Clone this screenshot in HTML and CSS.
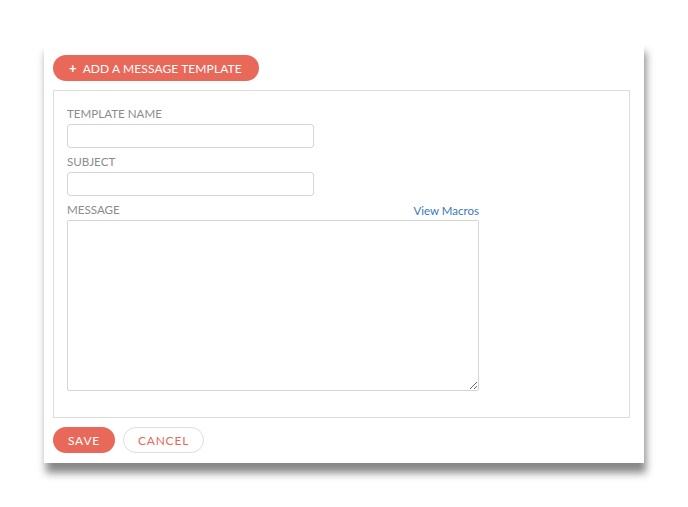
FILE: index.html
```html
<!DOCTYPE html>
<html>
<head>
<meta charset="utf-8">
<link rel="stylesheet" href="styles.css">
</head>
<body>
<div class="card">
  <button class="add-btn"><span class="plus">+</span>ADD A MESSAGE TEMPLATE</button>
  <div class="panel">
    <div class="field">
      <label class="label">TEMPLATE NAME</label>
      <input class="input" type="text">
    </div>
    <div class="field">
      <label class="label">SUBJECT</label>
      <input class="input" type="text">
    </div>
    <div class="field wide">
      <div class="label-row">
        <label class="label">MESSAGE</label>
        <a class="macros" href="#">View Macros</a>
      </div>
      <textarea class="textarea"></textarea>
    </div>
  </div>
  <div class="actions">
    <button class="btn save">SAVE</button>
    <button class="btn cancel">CANCEL</button>
  </div>
</div>
</body>
</html>
```
FILE: styles.css
```css
html, body {
  margin: 0;
  padding: 0;
  background: #fff;
  font-family: Lato, "Open Sans", sans-serif;
}
body {
  min-height: 507px;
  padding-top: 42px;
  box-sizing: border-box;
}
.card {
  margin: 0 0 0 44px;
  width: 600px;
  height: 421px;
  box-sizing: border-box;
  background: #fff;
  box-shadow: 2px 10px 8px rgba(0, 0, 0, 0.47);
  padding: 13px 14px 0 9px;
}
.add-btn {
  display: flex;
  align-items: center;
  height: 26px;
  width: 206px;
  box-sizing: border-box;
  padding: 0 0 0 16px;
  border: none;
  border-radius: 13px;
  background: #e8685a;
  color: #fff;
  font-family: Lato, sans-serif;
  font-size: 12px;
  letter-spacing: 0.1px;
  cursor: pointer;
}
.plus {
  font-weight: 700;
  font-size: 13px;
  margin-right: 6px;
}
.panel {
  margin-top: 9px;
  height: 328px;
  box-sizing: border-box;
  border: 1px solid #ddd;
  padding: 15px 0 0 13px;
  display: flex;
  flex-direction: column;
  gap: 6px;
}
.field {
  display: flex;
  flex-direction: column;
  width: 247px;
}
.field.wide {
  width: 412px;
}
.label {
  font-size: 11.6px;
  line-height: 15px;
  color: #8c8c8c;
  margin-bottom: 3px;
}
.label-row {
  display: flex;
  justify-content: space-between;
  align-items: baseline;
}
.macros {
  font-size: 11.5px;
  line-height: 15px;
  color: #3b79b6;
  text-decoration: none;
  position: relative;
  top: 1px;
}
.input {
  height: 24px;
  box-sizing: border-box;
  border: 1px solid #d6d6d6;
  border-radius: 3px;
  margin: 0;
  padding: 0 6px;
}
.textarea {
  height: 171px;
  box-sizing: border-box;
  border: 1px solid #d6d6d6;
  border-radius: 2px;
  margin: 0;
  padding: 4px 6px;
  resize: both;
}
.actions {
  margin-top: 9px;
  display: flex;
  gap: 8px;
}
.btn {
  height: 26px;
  box-sizing: border-box;
  border-radius: 13px;
  font-family: Lato, sans-serif;
  font-size: 12px;
  letter-spacing: 0.8px;
  cursor: pointer;
  padding: 0;
}
.save {
  width: 62px;
  border: none;
  background: #e8685a;
  color: #fff;
}
.cancel {
  width: 81px;
  border: 1px solid #ddd;
  background: #fff;
  color: #e8685a;
}
```
